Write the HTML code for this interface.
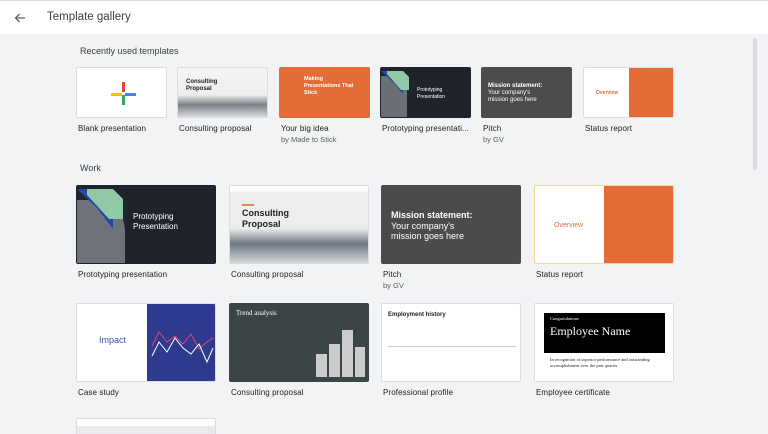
<!DOCTYPE html>
<html><head><style>
*{margin:0;padding:0;box-sizing:border-box}
html,body{width:768px;height:434px;overflow:hidden}
body{background:#f1f3f4;font-family:"Liberation Sans",Arial,sans-serif;color:#202124;position:relative}
.hdr{position:absolute;left:0;top:0;width:768px;height:34px;background:#fff;border-top:1px solid #ddd}
.hdr .t{position:absolute;left:47px;top:10px;font-size:11.5px;color:#3c4043}
.sec{position:absolute;font-size:9px;color:#3c4043}
.c{position:absolute;border-radius:2px;overflow:hidden;border:1px solid #dadce0;background:#fff}
.l{position:absolute;font-size:8px;color:#202124;letter-spacing:0.1px}
.s{position:absolute;font-size:7.5px;color:#5f6368}
.sb{position:absolute;left:752px;top:34px;width:6px;height:400px;background:#f1f3f4}
.th{position:absolute;left:753px;top:38px;width:4px;height:132px;background:#dadce0;border-radius:2px}
</style></head><body>
<div class="hdr">
<svg style="position:absolute;left:14px;top:12px" width="12" height="10" viewBox="0 0 12 10"><path d="M11 5H2M5.5 1L1.5 5l4 4" stroke="#5f6368" stroke-width="1.3" fill="none"/></svg>
<div class="t">Template gallery</div></div>
<div class="sb"></div><div class="th"></div>

<div class="sec" style="left:80px;top:46px">Recently used templates</div>
<div class="c" style="left:76px;top:67px;width:91px;height:51px">
<div style="position:absolute;left:45px;top:14px;width:3px;height:10px;background:#ea4335"></div>
<div style="position:absolute;left:45px;top:27px;width:3px;height:10px;background:#34a853"></div>
<div style="position:absolute;left:34px;top:25px;width:11px;height:3px;background:#fbbc04"></div>
<div style="position:absolute;left:48px;top:25px;width:11px;height:3px;background:#4285f4"></div>
</div>
<div class="c" style="left:177px;top:67px;width:91px;height:51px;background:linear-gradient(#f4f5f5 0,#eceeee 55%,#7a8088 75%,#d8dbdf 100%)">
<div style="position:absolute;left:8px;top:11px;font-size:6px;font-weight:bold;line-height:7px">Consulting<br>Proposal</div></div>
<div class="c" style="left:279px;top:67px;width:91px;height:51px;background:#e46c36;border-color:#e46c36">
<div style="position:absolute;left:24px;top:8px;font-size:5.5px;font-weight:bold;color:#fff;line-height:7px">Making<br>Presentations That<br>Stick</div></div>
<div class="c" style="left:380px;top:67px;width:91px;height:51px;background:#1f232c;border-color:#1f232c">
<div style="position:absolute;left:0;top:8px;width:26px;height:43px;background:#6a7076"></div>
<svg style="position:absolute;left:0;top:0" width="32" height="26"><path d="M0 3L14 16 22 26V12L16 3Z" fill="#2346a8"/><path d="M6 3H22L28 9V22L20 22 6 6Z" fill="#8fc9a5"/></svg>
<div style="position:absolute;left:36px;top:19px;font-size:5px;color:#fff;line-height:7px">Prototyping<br>Presentation</div></div>
<div class="c" style="left:481px;top:67px;width:91px;height:51px;background:#4b4c4d;border-color:#4b4c4d">
<div style="position:absolute;left:6px;top:15px;font-size:6px;color:#fff;line-height:7px"><b>Mission statement:</b><br>Your company's<br>mission goes here</div></div>
<div class="c" style="left:583px;top:67px;width:91px;height:51px">
<div style="position:absolute;left:45px;top:0;width:46px;height:51px;background:#e46c36"></div>
<div style="position:absolute;left:12px;top:22px;font-size:5px;color:#e46c36;font-weight:bold">Overview</div></div>
<div class="l" style="left:78px;top:124px">Blank presentation</div>
<div class="l" style="left:179px;top:124px">Consulting proposal</div>
<div class="l" style="left:281px;top:124px">Your big idea</div>
<div class="s" style="left:281px;top:135px">by Made to Stick</div>
<div class="l" style="left:382px;top:124px">Prototyping presentati...</div>
<div class="l" style="left:483px;top:124px">Pitch</div>
<div class="s" style="left:483px;top:135px">by GV</div>
<div class="l" style="left:585px;top:124px">Status report</div>

<div class="sec" style="left:80px;top:163px">Work</div>
<div class="c" style="left:76px;top:185px;width:140px;height:79px;background:#1f232c;border-color:#1f232c">
<div style="position:absolute;left:0;top:14px;width:48px;height:65px;background:#6d7378;border-radius:0 50% 0 0"></div>
<svg style="position:absolute;left:0;top:0" width="50" height="45"><path d="M0 3L20 22 36 43V20L26 3Z" fill="#2346a8"/><path d="M10 3H36L46 13V33L32 33 10 9Z" fill="#8fc9a5"/></svg>
<div style="position:absolute;left:56px;top:26px;font-size:8px;color:#fff;line-height:10px">Prototyping<br>Presentation</div></div>
<div class="c" style="left:229px;top:185px;width:140px;height:79px;background:linear-gradient(#fff 0,#fff 7%,#eceeee 8%,#eceeee 55%,#6e7680 75%,#d5d9dd 100%)">
<div style="position:absolute;left:12px;top:18px;width:12px;height:2px;background:#e48a60"></div>
<div style="position:absolute;left:12px;top:22px;font-size:9px;font-weight:bold;line-height:11px">Consulting<br>Proposal</div></div>
<div class="c" style="left:381px;top:185px;width:140px;height:79px;background:#4a4b4c;border-color:#4a4b4c">
<div style="position:absolute;left:9px;top:24px;font-size:9px;color:#fff;line-height:10.5px"><b>Mission statement:</b><br>Your company's<br>mission goes here</div></div>
<div class="c" style="left:534px;top:185px;width:140px;height:79px;border-color:#f6d98a">
<div style="position:absolute;left:69px;top:0;width:71px;height:79px;background:#e46c36"></div>
<div style="position:absolute;left:19px;top:36px;font-size:7px;color:#e46c36">Overview</div></div>
<div class="l" style="left:78px;top:270px">Prototyping presentation</div>
<div class="l" style="left:231px;top:270px">Consulting proposal</div>
<div class="l" style="left:383px;top:270px">Pitch</div>
<div class="s" style="left:383px;top:281px">by GV</div>
<div class="l" style="left:536px;top:270px">Status report</div>

<div class="c" style="left:76px;top:303px;width:140px;height:79px">
<div style="position:absolute;left:70px;top:0;width:70px;height:79px;background:#2e3a8e"></div>
<svg style="position:absolute;left:70px;top:0" width="70" height="79"><polyline points="5,42 12,28 20,38 28,32 36,40 44,30 52,45 60,38 66,34" stroke="#e0457b" fill="none" stroke-width="1"/><polyline points="5,52 12,38 20,48 28,34 36,44 44,50 52,40 60,58 66,44" stroke="#fff" fill="none" stroke-width="1"/></svg>
<div style="position:absolute;left:22px;top:31px;font-size:9px;color:#3f4ea8">Impact</div></div>
<div class="c" style="left:229px;top:303px;width:140px;height:79px;background:#3b4446;border-color:#3b4446">
<div style="position:absolute;left:6px;top:5px;font-size:7px;color:#fff;font-family:'Liberation Serif',serif">Trend analysis</div>
<div style="position:absolute;left:86px;top:50px;width:11px;height:23px;background:#ccc"></div>
<div style="position:absolute;left:99px;top:40px;width:11px;height:33px;background:#ccc"></div>
<div style="position:absolute;left:112px;top:26px;width:11px;height:47px;background:#ccc"></div>
<div style="position:absolute;left:125px;top:43px;width:10px;height:30px;background:#ccc"></div></div>
<div class="c" style="left:381px;top:303px;width:140px;height:79px">
<div style="position:absolute;left:6px;top:8px;font-size:6px;font-weight:bold">Employment history</div>
<div style="position:absolute;left:6px;top:42px;width:128px;height:1px;background:#c9c3f0"></div></div>
<div class="c" style="left:534px;top:303px;width:140px;height:79px">
<div style="position:absolute;left:9px;top:9px;width:121px;height:40px;background:#000"></div>
<div style="position:absolute;left:15px;top:12px;font-size:4.5px;color:#fff;font-family:'Liberation Serif',serif">Congratulations</div>
<div style="position:absolute;left:15px;top:20px;font-size:12px;color:#fff;font-family:'Liberation Serif',serif">Employee Name</div>
<div style="position:absolute;left:15px;top:53px;font-size:4.5px;font-family:'Liberation Serif',serif;line-height:6px">In recognition of superior performance and outstanding<br>accomplishment over the past quarter</div></div>
<div class="l" style="left:78px;top:388px">Case study</div>
<div class="l" style="left:231px;top:388px">Consulting proposal</div>
<div class="l" style="left:383px;top:388px">Professional profile</div>
<div class="l" style="left:536px;top:388px">Employee certificate</div>
<div class="c" style="left:76px;top:418px;width:140px;height:16px;background:#fff;border-bottom:none;border-radius:2px 2px 0 0"><div style="position:absolute;left:0;top:7px;width:140px;height:9px;background:#e8eaed"></div></div>
</body></html>
